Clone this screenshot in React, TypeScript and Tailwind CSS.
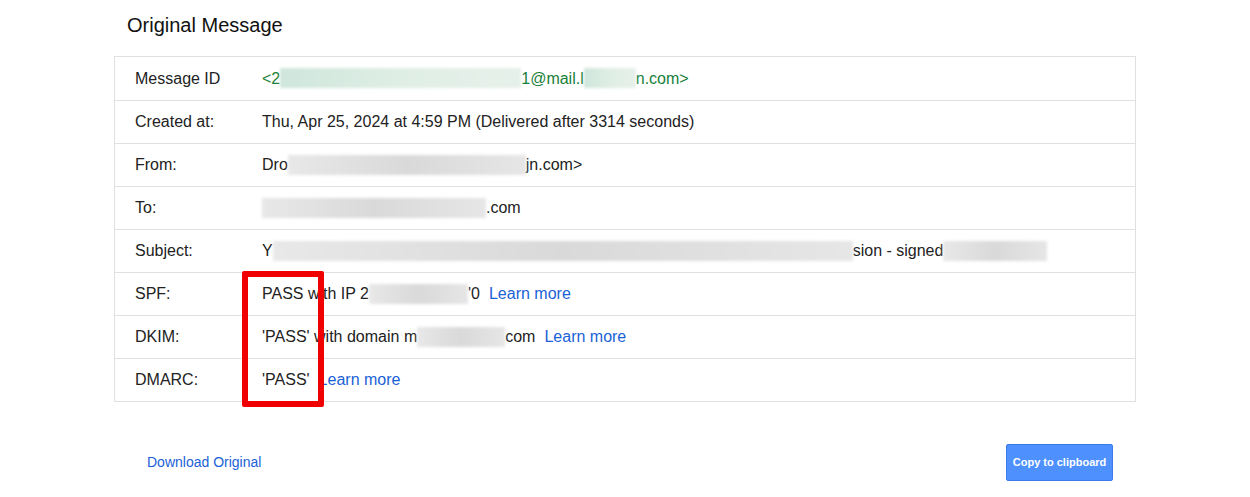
import React from 'react';

// Redacted chunk of text, drawn as a soft blurred bar
const Blur = ({ w, green = false }: { w: number; green?: boolean }) => (
  <span
    className={`inline-block h-[20px] align-[-4px] blur-[1.5px] ${
      green
        ? 'bg-gradient-to-r from-[#cfe6dc] via-[#dfeee5] to-[#e6f0ea]'
        : 'bg-gradient-to-r from-[#e8e8e8] via-[#d9d9d9] to-[#e6e6e6]'
    }`}
    style={{ width: w }}
  />
);

const LearnMore = () => (
  <a href="#" className="ml-[9px] text-[#1a62d6]">
    Learn more
  </a>
);

interface Row {
  label: string;
  value: React.ReactNode;
}

const rows: Row[] = [
  {
    label: 'Message ID',
    value: (
      <span className="text-[#188038]">
        &lt;2<Blur w={241} green />1@mail.l<Blur w={52} green />n.com&gt;
      </span>
    ),
  },
  { label: 'Created at:', value: 'Thu, Apr 25, 2024 at 4:59 PM (Delivered after 3314 seconds)' },
  {
    label: 'From:',
    value: (
      <>
        Dro<Blur w={238} />jn.com&gt;
      </>
    ),
  },
  {
    label: 'To:',
    value: (
      <>
        <Blur w={224} />.com
      </>
    ),
  },
  {
    label: 'Subject:',
    value: (
      <>
        Y<Blur w={580} />sion - signed<Blur w={104} />
      </>
    ),
  },
  {
    label: 'SPF:',
    value: (
      <>
        PASS with IP 2<Blur w={99} />'0<LearnMore />
      </>
    ),
  },
  {
    label: 'DKIM:',
    value: (
      <>
        'PASS' with domain m<Blur w={88} />com<LearnMore />
      </>
    ),
  },
  {
    label: 'DMARC:',
    value: (
      <>
        'PASS'<LearnMore />
      </>
    ),
  },
];

export default function App() {
  return (
    <div className="min-h-[497px] w-[1250px] bg-white font-['Liberation_Sans',Arial,sans-serif] text-[#222]">
      <div className="ml-[114px] w-[1022px] pt-[12px]">
        <h1 className="pl-[13px] text-[20px] leading-[26px] text-[#111]">Original Message</h1>

        <div className="relative mt-[18px] border border-[#e0e0e0]">
          {rows.map((r, i) => (
            <div
              key={r.label}
              className={`flex h-[43px] items-center text-[16px] whitespace-nowrap ${
                i > 0 ? 'border-t border-[#e0e0e0]' : ''
              }`}
            >
              <div className="w-[147px] shrink-0 pl-[20px]">{r.label}</div>
              <div className="flex items-center">{r.value}</div>
            </div>
          ))}

          {/* highlight box around the PASS results */}
          <div className="absolute left-[127px] top-[214px] h-[136px] w-[82px] rounded-[2px] border-[6px] border-[#f00000]" />
        </div>

        <div className="mt-[42px] flex items-center justify-between pl-[33px] pr-[23px]">
          <a href="#" className="text-[14px] text-[#1a62d6]">
            Download Original
          </a>
          <button className="h-[37px] w-[107px] rounded-[2px] border border-[#3b7be9] bg-[#4d90fe] text-[11px] font-bold text-white">
            Copy to clipboard
          </button>
        </div>
      </div>
    </div>
  );
}
